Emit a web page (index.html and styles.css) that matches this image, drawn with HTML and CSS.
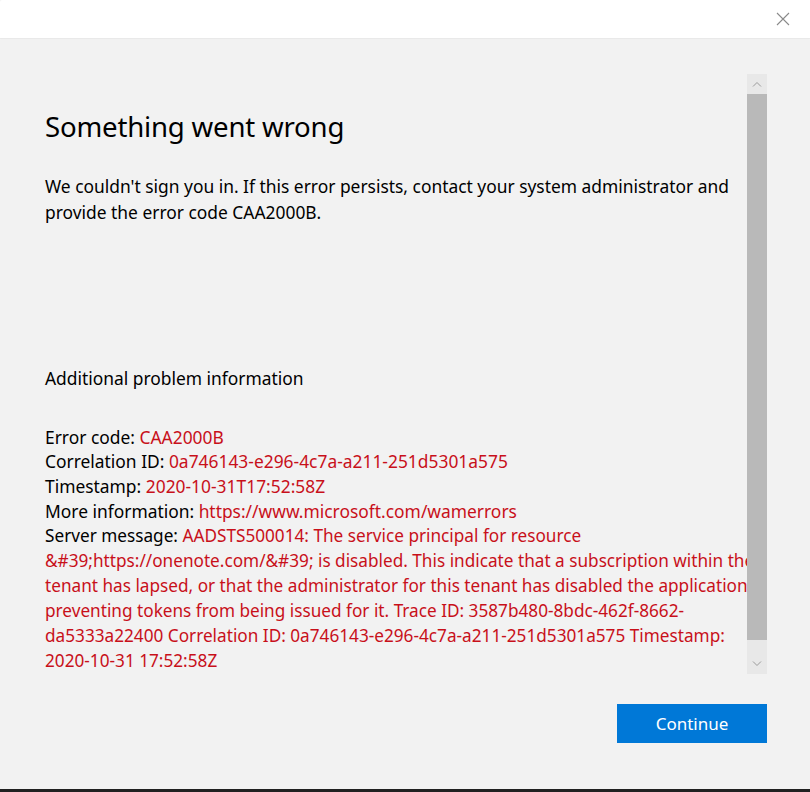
FILE: index.html
```html
<!DOCTYPE html>
<html lang="en">
<head>
<meta charset="utf-8">
<title>Something went wrong</title>
<link rel="stylesheet" href="styles.css">
</head>
<body>
<div class="window">
  <div class="titlebar">
    <button class="close" aria-label="Close">
      <svg width="14" height="14" viewBox="0 0 14 14"><path d="M1 1L13 13M13 1L1 13" stroke="#8a8a8a" stroke-width="1.1" fill="none"/></svg>
    </button>
  </div>
  <div class="main">
    <div class="scrollarea">
      <div class="content">
        <h1 class="title">Something went wrong</h1>
        <p class="lead">We couldn't sign you in. If this error persists, contact your system administrator and provide the error code CAA2000B.</p>
        <h2 class="subhead">Additional problem information</h2>
        <div class="details">
          <div>Error code: <span class="err">CAA2000B</span></div>
          <div>Correlation ID: <span class="err">0a746143-e296-4c7a-a211-251d5301a575</span></div>
          <div>Timestamp: <span class="err">2020-10-31T17:52:58Z</span></div>
          <div>More information: <span class="err">https://www.microsoft.com/wamerrors</span></div>
          <div class="server">Server message: <span class="err">AADSTS500014: The service principal for resource<br>&amp;#39;https://onenote.com/&amp;#39; is disabled. This indicate that a subscription within the<br>tenant has lapsed, or that the administrator for this tenant has disabled the application,<br>preventing tokens from being issued for it. Trace ID: 3587b480-8bdc-462f-8662-<br>da5333a22400 Correlation ID: 0a746143-e296-4c7a-a211-251d5301a575 Timestamp:<br>2020-10-31 17:52:58Z</span></div>
        </div>
      </div>
    </div>
    <div class="scrollbar">
      <div class="arrow up"><svg width="10" height="6" viewBox="0 0 10 6"><path d="M1 5.5L5 1.5L9 5.5" stroke="#9a9a9a" fill="none"/></svg></div>
      <div class="thumb"></div>
      <div class="track"></div>
      <div class="arrow down"><svg width="10" height="6" viewBox="0 0 10 6"><path d="M1 0.5L5 4.5L9 0.5" stroke="#9a9a9a" fill="none"/></svg></div>
    </div>
  </div>
  <div class="footer">
    <button class="primary">Continue</button>
  </div>
  <div class="taskbar"></div>
</div>
</body>
</html>
```
FILE: styles.css
```css
html, body {
  margin: 0;
  padding: 0;
}
body {
  background: #f2f2f2;
  font-family: "Noto Sans", "Open Sans", sans-serif;
  color: #000;
  overflow: hidden;
}
.window {
  width: 810px;
  height: 792px;
  display: flex;
  flex-direction: column;
  background: #f2f2f2;
}
.titlebar {
  height: 38px;
  background: #fff;
  display: flex;
  justify-content: flex-end;
  align-items: flex-start;
  box-shadow: 0 1px 1px rgba(0,0,0,0.04);
  border-top-left-radius: 2px;
}
.close {
  width: 34px;
  height: 38px;
  margin-right: 10px;
  border: none;
  background: transparent;
  padding: 0;
  display: flex;
  align-items: center;
  justify-content: center;
}
.main {
  margin-top: 36px;
  height: 600px;
  display: flex;
}
.scrollarea {
  width: 747px;
  height: 600px;
  overflow: hidden;
}
.content {
  width: 760px;
  padding-left: 45px;
}
.title {
  margin: 34px 0 0;
  font-size: 27.6px;
  font-weight: 400;
  line-height: 36px;
  letter-spacing: -0.2px;
}
.lead {
  margin: 29px 0 0;
  max-width: 700px;
  font-size: 17.4px;
  line-height: 26px;
}
.subhead {
  margin: 140px 0 0;
  font-size: 17.4px;
  font-weight: 400;
  line-height: 26px;
}
.details {
  margin-top: 33.5px;
  font-size: 17.4px;
  line-height: 24.9px;
}
.server {
  white-space: nowrap;
  font-size: 17.2px;
}
.err {
  color: #c8101a;
}
.scrollbar {
  width: 20px;
  height: 600px;
  display: flex;
  flex-direction: column;
  background: #e8e8e8;
}
.arrow {
  height: 20px;
  display: flex;
  align-items: center;
  justify-content: center;
  background: #e8e8e8;
}
.thumb {
  height: 546px;
  background: #b9b9b9;
}
.track {
  flex: 1;
}
.footer {
  margin-top: 30px;
  display: flex;
  justify-content: flex-end;
  padding-right: 43px;
}
.primary {
  width: 150px;
  height: 39px;
  border: none;
  background: #0078d7;
  color: #fff;
  font-family: "Noto Sans", "Open Sans", sans-serif;
  font-size: 17px;
  padding: 0;
}
.taskbar {
  margin-top: auto;
  height: 3px;
  background: #202020;
}
```
